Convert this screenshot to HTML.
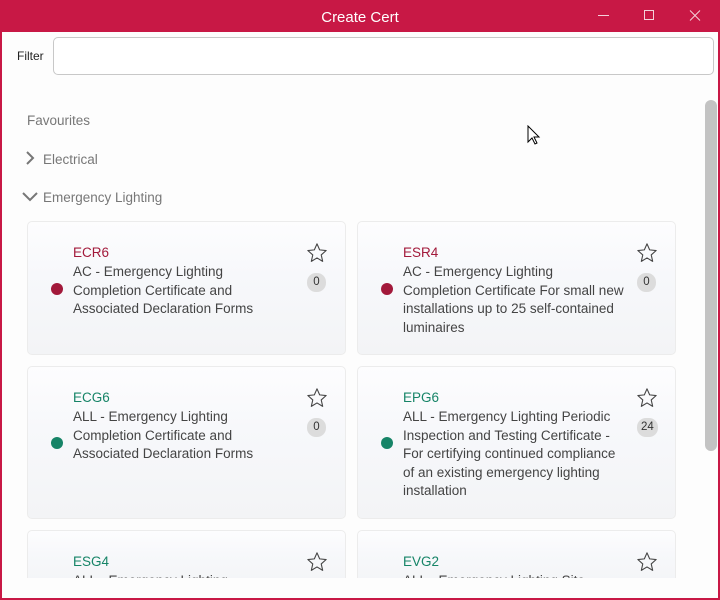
<!DOCTYPE html>
<html><head><style>
*{margin:0;padding:0;box-sizing:border-box}
html,body{width:720px;height:600px;overflow:hidden}
body{background:#c81845;font-family:"Liberation Sans",sans-serif;position:relative}
.title{position:absolute;left:0;top:0;width:720px;height:32px;color:#fff;font-size:15px;text-align:center;line-height:35px}
.win{position:absolute;left:2px;top:32px;width:716px;height:566px;background:#fdfdfd;overflow:hidden}
.flabel{position:absolute;left:15px;top:17px;font-size:12px;color:#222}
.filter{position:absolute;left:51px;top:5px;width:661px;height:38px;border:1px solid #c8c8c8;border-radius:5px;background:#fff}
.sec{position:absolute;font-size:13.5px;color:#777}
.clip{position:absolute;left:0;top:60px;width:716px;height:486px;overflow:hidden}
.card{position:absolute;width:319px;border:1px solid #ececec;border-radius:5px;background:linear-gradient(#fdfdfe 0,#f7f8fb 40%,#f3f4f6 100%)}
.code{position:absolute;left:45px;top:23px;font-size:13.5px}
.desc{position:absolute;left:45px;top:41px;width:240px;font-size:13.5px;line-height:18.5px;color:#444;white-space:nowrap}
.dot{position:absolute;left:23px;width:12px;height:12px;border-radius:50%}
.star{position:absolute;left:278px;top:20px}
.badge{position:absolute;left:279px;top:51px;min-width:19px;height:19px;padding:0 4px;border-radius:9px;background:#dcdcdc;color:#333;font-size:11.5px;text-align:center;line-height:19px}
.r{color:#a2193a}.g{color:#168467}
.scroll{position:absolute;left:703px;top:68px;width:12px;height:351px;background:#c3c3c3;border-radius:6px}
</style></head><body>
<div class="title">Create Cert</div>
<svg style="position:absolute;left:597px;top:10px" width="120" height="14"><line x1="1" y1="5.5" x2="12" y2="5.5" stroke="#fff" stroke-opacity=".8"/><rect x="47.5" y="0.5" width="9" height="9" fill="none" stroke="#fff" stroke-opacity=".8"/><path d="M93 0.5l10 10M103 0.5l-10 10" stroke="#fff" stroke-opacity=".8"/></svg>
<div class="win">
<div class="flabel">Filter</div>
<div class="filter"></div>
<div class="sec" style="left:25px;top:81px">Favourites</div>
<svg style="position:absolute;left:22px;top:119px" width="12" height="14"><path d="M3 1l6 6-6 6" fill="none" stroke="#777" stroke-width="2"/></svg>
<div class="sec" style="left:41px;top:120px">Electrical</div>
<svg style="position:absolute;left:20px;top:160px" width="16" height="10"><path d="M1 1l7 7 7-7" fill="none" stroke="#777" stroke-width="2"/></svg>
<div class="sec" style="left:41px;top:158px">Emergency Lighting</div>
<div class="clip">
<div class="card" style="left:25px;top:129px;height:134px"><div class="code r">ECR6</div><div class="desc">AC - Emergency Lighting<br>Completion Certificate and<br>Associated Declaration Forms</div><div class="dot" style="top:61px;background:#a2193a"></div>
<svg class="star" width="22" height="22" viewBox="0 0 24 24"><path d="M12 2l2.9 6.6 7.1.7-5.4 4.8 1.6 7-6.2-3.7-6.2 3.7 1.6-7L2 9.3l7.1-.7z" fill="none" stroke="#444" stroke-width="1.2" stroke-linejoin="round"/></svg><div class="badge">0</div></div>
<div class="card" style="left:355px;top:129px;height:134px"><div class="code r">ESR4</div><div class="desc">AC - Emergency Lighting<br>Completion Certificate For small new<br>installations up to 25 self-contained<br>luminaires</div><div class="dot" style="top:61px;background:#a2193a"></div>
<svg class="star" width="22" height="22" viewBox="0 0 24 24"><path d="M12 2l2.9 6.6 7.1.7-5.4 4.8 1.6 7-6.2-3.7-6.2 3.7 1.6-7L2 9.3l7.1-.7z" fill="none" stroke="#444" stroke-width="1.2" stroke-linejoin="round"/></svg><div class="badge">0</div></div>
<div class="card" style="left:25px;top:274px;height:153px"><div class="code g">ECG6</div><div class="desc">ALL - Emergency Lighting<br>Completion Certificate and<br>Associated Declaration Forms</div><div class="dot" style="top:70px;background:#168467"></div>
<svg class="star" width="22" height="22" viewBox="0 0 24 24"><path d="M12 2l2.9 6.6 7.1.7-5.4 4.8 1.6 7-6.2-3.7-6.2 3.7 1.6-7L2 9.3l7.1-.7z" fill="none" stroke="#444" stroke-width="1.2" stroke-linejoin="round"/></svg><div class="badge">0</div></div>
<div class="card" style="left:355px;top:274px;height:153px"><div class="code g">EPG6</div><div class="desc">ALL - Emergency Lighting Periodic<br>Inspection and Testing Certificate -<br>For certifying continued compliance<br>of an existing emergency lighting<br>installation</div><div class="dot" style="top:70px;background:#168467"></div>
<svg class="star" width="22" height="22" viewBox="0 0 24 24"><path d="M12 2l2.9 6.6 7.1.7-5.4 4.8 1.6 7-6.2-3.7-6.2 3.7 1.6-7L2 9.3l7.1-.7z" fill="none" stroke="#444" stroke-width="1.2" stroke-linejoin="round"/></svg><div class="badge">24</div></div>
<div class="card" style="left:25px;top:438px;height:60px"><div class="code g">ESG4</div><div class="desc">ALL - Emergency Lighting</div>
<svg class="star" width="22" height="22" viewBox="0 0 24 24"><path d="M12 2l2.9 6.6 7.1.7-5.4 4.8 1.6 7-6.2-3.7-6.2 3.7 1.6-7L2 9.3l7.1-.7z" fill="none" stroke="#444" stroke-width="1.2" stroke-linejoin="round"/></svg></div>
<div class="card" style="left:355px;top:438px;height:60px"><div class="code g">EVG2</div><div class="desc">ALL - Emergency Lighting Site</div>
<svg class="star" width="22" height="22" viewBox="0 0 24 24"><path d="M12 2l2.9 6.6 7.1.7-5.4 4.8 1.6 7-6.2-3.7-6.2 3.7 1.6-7L2 9.3l7.1-.7z" fill="none" stroke="#444" stroke-width="1.2" stroke-linejoin="round"/></svg></div>
</div>
<div class="scroll"></div>
<svg style="position:absolute;left:525px;top:93px" width="14" height="22"><path d="M1 1v16l4-4 3 6 2-1-3-6h5z" fill="#fff" stroke="#000" stroke-width="1"/></svg>
</div>
</body></html>
